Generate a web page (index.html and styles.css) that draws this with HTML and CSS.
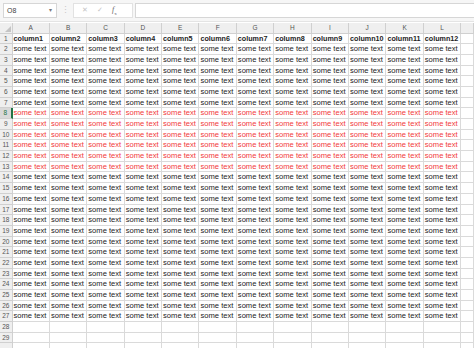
FILE: index.html
```html
<!DOCTYPE html>
<html lang="en">
<head>
    <meta charset="UTF-8">
    <title>Sheet</title>
    <link rel="stylesheet" href="styles.css">
</head>
<body>
    <div class="toolbar">
        <div class="namebox">O8<span class="arrow">&#9662;</span></div>
        <div class="sep">&#8942;</div>
        <div class="fbuttons">
            <span class="fbtn">&#10005;</span>
            <span class="fbtn">&#10003;</span>
            <span class="fbtn fx"><i>f</i><sub>x</sub></span>
        </div>
        <div class="formula"></div>
    </div>

    <div id="sheet" class="sheet">
        <div class="cell head corner"><span class="tri"></span></div>
    </div>

    <script>
        const letters = 'ABCDEFGHIJKL';
        const sheet = document.getElementById('sheet');

        function addCell(text, cls) {
            const cell = document.createElement('div');
            cell.className = 'cell ' + cls;
            cell.textContent = text;
            sheet.appendChild(cell);
        }

        for (let c = 0; c < letters.length; c++) {
            addCell(letters[c], 'head');
        }
        addCell('', 'head'); // partial column M

        // row 30 is only a sliver at the bottom, so no number
        for (let r = 1; r <= 30; r++) {
            addCell(r < 30 ? r : '', r === 8 ? 'rowhead active' : 'rowhead');
            let cls = 'data';
            if (r === 1) cls += ' bold';
            if (r >= 8 && r <= 13) cls += ' red';

            for (let c = 0; c <= letters.length; c++) {
                let text = '';
                if (c < letters.length) {
                    if (r === 1) text = 'column' + (c + 1);
                    else if (r <= 27) text = 'some text';
                }
                addCell(text, cls);
            }
        }
    </script>
</body>
</html>
```

FILE: styles.css
```css
body {
    margin: 0;
    width: 474px;
    height: 348px;
    overflow: hidden;
    background: #fff;
    font-family: "Liberation Sans", Arial, sans-serif;
}
.toolbar {
    display: flex;
    align-items: center;
    height: 22px;
    padding: 0 0 1px 3px;
    background: #f6f6f6;
    border-bottom: 1px solid #e4e4e4;
    box-sizing: border-box;
}
.namebox {
    width: 54px;
    height: 15px;
    box-sizing: border-box;
    background: #fff;
    border: 1px solid #d6d6d6;
    font-size: 7px;
    color: #444;
    padding-left: 3px;
    line-height: 13px;
    display: flex;
    justify-content: space-between;
}
.namebox .arrow {
    font-size: 6px;
    color: #777;
    padding-right: 4px;
}
.sep {
    width: 16px;
    text-align: center;
    font-size: 9px;
    color: #c8c8c8;
}
.fbuttons {
    display: flex;
    align-items: center;
    height: 15px;
    width: 60px;
    background: #fff;
    border: 1px solid #e2e2e2;
    box-sizing: border-box;
    padding-left: 8px;
    gap: 9px;
}
.fbtn {
    font-size: 7px;
    color: #c4c4c4;
}
.fx {
    color: #666;
    font-family: "Liberation Serif", serif;
    font-size: 8px;
}
.fx sub {
    font-size: 5px;
}
.formula {
    flex: 1;
    height: 15px;
    margin-left: 2px;
    background: #fff;
    border: 1px solid #d6d6d6;
    border-right: none;
    box-sizing: border-box;
}
.sheet {
    display: grid;
    grid-template-columns: 12.5px repeat(12, 37.4px) 12.7px;
    grid-template-rows: 10.5px;
    grid-auto-rows: 10.7px;
    margin-top: 1px;
    width: 474px;
    height: 325px;
    overflow: hidden;
}
.cell {
    box-sizing: border-box;
    border-right: 1px solid #dadada;
    border-bottom: 1px solid #dadada;
    white-space: nowrap;
    overflow: hidden;
    font-size: 7.6px;
    line-height: 10px;
    padding-left: 1px;
    color: #222;
}
.head, .rowhead {
    background: #efefef;
    color: #555;
    font-size: 6.5px;
    text-align: center;
    padding-left: 0;
    border-color: #d0d0d0;
}
.corner {
    position: relative;
}
.tri {
    position: absolute;
    right: 1px;
    bottom: 1px;
    width: 0;
    height: 0;
    border-left: 6px solid transparent;
    border-bottom: 6px solid #c4c4c4;
}
.rowhead.active {
    background: #d9d9d9;
    color: #217346;
    border-right: 2px solid #217346;
}
.red {
    color: #f23a3a;
}
.bold {
    font-weight: bold;
    font-size: 7.2px;
}
```
